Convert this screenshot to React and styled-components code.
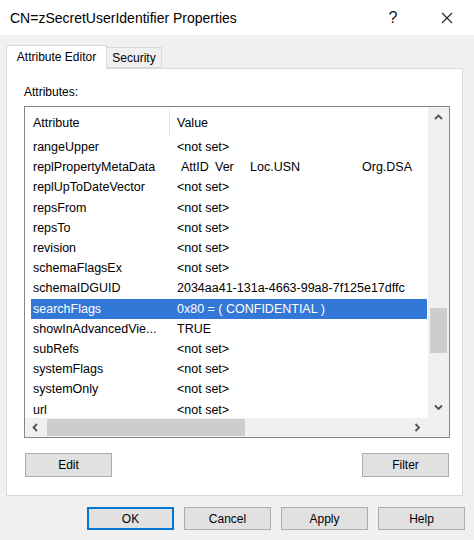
import React from "react";
import styled, { createGlobalStyle, css } from "styled-components";

const GlobalStyle = createGlobalStyle`
    html, body {
        margin: 0;
        padding: 0;
        background: #f0f0f0;
    }
    body {
        font-family: "Liberation Sans", Arial, sans-serif;
        color: #000;
    }
`;

const ROW_HEIGHT = 20.2;

// Window frame
const Window = styled.div`
    width: 474px;
    height: 540px;
    background: #f0f0f0;
    display: flex;
    flex-direction: column;
    overflow: hidden;
`;

const TitleBar = styled.div`
    height: 35px;
    background: #fff;
    display: flex;
    align-items: center;
    padding: 0 4px 0 10px;
    box-sizing: border-box;
`;

const Title = styled.div`
    flex: 1;
    font-size: 14px;
    color: #000;
`;

const TitleButton = styled.div`
    width: 46px;
    height: 35px;
    display: flex;
    align-items: center;
    justify-content: center;
    font-size: 16px;
    color: #111;
    margin-right: ${p => p.$gap || 0}px;
`;

const Body = styled.div`
    flex: 1;
    display: flex;
    flex-direction: column;
    padding: 10px 9px 0 6px;
`;

// Tabs
const TabStrip = styled.div`
    display: flex;
    align-items: flex-end;
    height: 23px;
    margin-right: 2px;
`;

const Tab = styled.div`
    box-sizing: border-box;
    display: flex;
    align-items: center;
    justify-content: center;
    font-size: 12px;
    border: 1px solid #d9d9d9;
    ${p => p.$active ? css`
        height: 24px;
        width: 101px;
        margin-bottom: -1px;
        border-bottom: none;
        background: #fff;
        position: relative;
        z-index: 1;
        padding-bottom: 2px;
    ` : css`
        height: 21px;
        width: 55px;
        border-left: none;
        background: #f0f0f0;
        padding-top: 1px;
    `}
`;

const Panel = styled.div`
    height: 428px;
    box-sizing: border-box;
    margin-right: 2px;
    background: #fff;
    border: 1px solid #d9d9d9;
    padding: 16px 12px 0 17px;
    display: flex;
    flex-direction: column;
`;

const Label = styled.div`
    font-size: 12px;
    line-height: 15px;
    height: 15px;
    margin-bottom: 6px;
`;

// List view
const ListBox = styled.div`
    width: 426px;
    height: 332px;
    box-sizing: border-box;
    border: 1px solid #828790;
    display: grid;
    grid-template-columns: 1fr 21px;
    grid-template-rows: 1fr 19px;
    font-size: 12.5px;
`;

const ListContent = styled.div`
    overflow: hidden;
    background: #fff;
`;

const Header = styled.div`
    height: 30px;
    display: flex;
    align-items: center;
`;

const HeaderCell = styled.div`
    box-sizing: border-box;
    height: 27px;
    display: flex;
    align-items: center;
    padding-left: ${p => p.$pad}px;
    width: ${p => p.$width ? `${p.$width}px` : "auto"};
    border-right: ${p => p.$divider ? "1px solid #e5e5e5" : "none"};
    margin-top: 1px;
`;

const Row = styled.div`
    height: ${ROW_HEIGHT}px;
    margin: 0 1px 0 6px;
    display: flex;
    align-items: center;
    white-space: nowrap;
    background: ${p => p.$selected ? "#3378d7" : "transparent"};
    color: ${p => p.$selected ? "#fff" : "#000"};
`;

const NameCell = styled.div`
    width: 146px;
    padding-left: 2px;
    box-sizing: border-box;
    flex-shrink: 0;
`;

const ValueCell = styled.div`
    flex: 1;
`;

const SubCol = styled.span`
    display: inline-block;
    width: ${p => p.$width}px;
    margin-left: ${p => p.$offset || 0}px;
`;

// Scrollbars
const VScroll = styled.div`
    background: #f0f0f0;
    display: flex;
    flex-direction: column;
`;

const HScroll = styled.div`
    background: #f0f0f0;
    display: flex;
`;

const Corner = styled.div`
    background: #f0f0f0;
`;

const ArrowButton = styled.div`
    width: 21px;
    height: ${p => p.$tall ? 21 : 19}px;
    flex-shrink: 0;
    display: flex;
    align-items: center;
    justify-content: center;
`;

const VTrack = styled.div`
    flex: 1;
    display: flex;
    flex-direction: column;
    align-items: center;
`;

const VThumb = styled.div`
    width: 17px;
    height: 45px;
    margin-top: 180px;
    background: #cdcdcd;
`;

const HTrack = styled.div`
    flex: 1;
    display: flex;
    align-items: center;
    padding-left: 1px;
`;

const HThumb = styled.div`
    width: 198px;
    height: 17px;
    background: #cdcdcd;
`;

// Buttons
const ButtonRow = styled.div`
    display: flex;
    justify-content: ${p => p.$end ? "flex-end" : "space-between"};
    gap: 10px;
    margin: ${p => p.$end ? "11px 0 0 0" : "15px 1px 0 1px"};
`;

const Button = styled.button`
    width: 87px;
    height: ${p => p.$short ? 23 : 24}px;
    box-sizing: border-box;
    background: #e1e1e1;
    border: 1px solid ${p => p.$default ? "#0078d7" : "#adadad"};
    box-shadow: ${p => p.$default ? "inset 0 0 0 1px #0078d7" : "none"};
    font-family: "Liberation Sans", Arial, sans-serif;
    font-size: 12px;
    color: #000;
    padding: 0;
    border-radius: 0;
`;

const Chevron = ({ dir }) => {
    const paths = {
        up: "M1 5 L4.5 1.5 L8 5",
        down: "M1 1.5 L4.5 5 L8 1.5",
        left: "M5 1 L1.5 4.5 L5 8",
        right: "M1.5 1 L5 4.5 L1.5 8",
    };
    const vertical = dir === "up" || dir === "down";
    return (
        <svg width={vertical ? 9 : 7} height={vertical ? 7 : 9} viewBox={vertical ? "0 0 9 7" : "0 0 7 9"}>
            <path d={paths[dir]} fill="none" stroke="#505050" strokeWidth="1.8" />
        </svg>
    );
};

const CloseIcon = () => (
    <svg width="12" height="12" viewBox="0 0 12 12">
        <path d="M1 1 L11 11 M11 1 L1 11" stroke="#222" strokeWidth="1.1" fill="none" />
    </svg>
);

const rows = [
    { name: "rangeUpper", value: "<not set>" },
    { name: "replPropertyMetaData", meta: true },
    { name: "replUpToDateVector", value: "<not set>" },
    { name: "repsFrom", value: "<not set>" },
    { name: "repsTo", value: "<not set>" },
    { name: "revision", value: "<not set>" },
    { name: "schemaFlagsEx", value: "<not set>" },
    { name: "schemaIDGUID", value: "2034aa41-131a-4663-99a8-7f125e17dffc" },
    { name: "searchFlags", value: "0x80 = ( CONFIDENTIAL )", selected: true },
    { name: "showInAdvancedVie...", value: "TRUE" },
    { name: "subRefs", value: "<not set>" },
    { name: "systemFlags", value: "<not set>" },
    { name: "systemOnly", value: "<not set>" },
    { name: "url", value: "<not set>" },
];

export default function App() {
    return (
        <Window>
            <GlobalStyle />
            <TitleBar>
                <Title>CN=zSecretUserIdentifier Properties</Title>
                <TitleButton $gap={8}>?</TitleButton>
                <TitleButton><CloseIcon /></TitleButton>
            </TitleBar>
            <Body>
                <TabStrip>
                    <Tab $active>Attribute Editor</Tab>
                    <Tab>Security</Tab>
                </TabStrip>
                <Panel>
                    <Label>Attributes:</Label>
                    <ListBox>
                        <ListContent>
                            <Header>
                                <HeaderCell $width={145} $pad={8} $divider>Attribute</HeaderCell>
                                <HeaderCell $pad={7}>Value</HeaderCell>
                            </Header>
                            {rows.map(r => (
                                <Row key={r.name} $selected={r.selected}>
                                    <NameCell>{r.name}</NameCell>
                                    <ValueCell>
                                        {r.meta ? (
                                            <>
                                                <SubCol $offset={4} $width={34}>AttID</SubCol>
                                                <SubCol $width={35}>Ver</SubCol>
                                                <SubCol $width={112}>Loc.USN</SubCol>
                                                <SubCol $width={60}>Org.DSA</SubCol>
                                            </>
                                        ) : r.value}
                                    </ValueCell>
                                </Row>
                            ))}
                        </ListContent>
                        <VScroll>
                            <ArrowButton $tall><Chevron dir="up" /></ArrowButton>
                            <VTrack><VThumb /></VTrack>
                            <ArrowButton $tall><Chevron dir="down" /></ArrowButton>
                        </VScroll>
                        <HScroll>
                            <ArrowButton><Chevron dir="left" /></ArrowButton>
                            <HTrack><HThumb /></HTrack>
                            <ArrowButton><Chevron dir="right" /></ArrowButton>
                        </HScroll>
                        <Corner />
                    </ListBox>
                    <ButtonRow>
                        <Button>Edit</Button>
                        <Button>Filter</Button>
                    </ButtonRow>
                </Panel>
                <ButtonRow $end>
                    <Button $short $default>OK</Button>
                    <Button $short>Cancel</Button>
                    <Button $short>Apply</Button>
                    <Button $short>Help</Button>
                </ButtonRow>
            </Body>
        </Window>
    );
}
